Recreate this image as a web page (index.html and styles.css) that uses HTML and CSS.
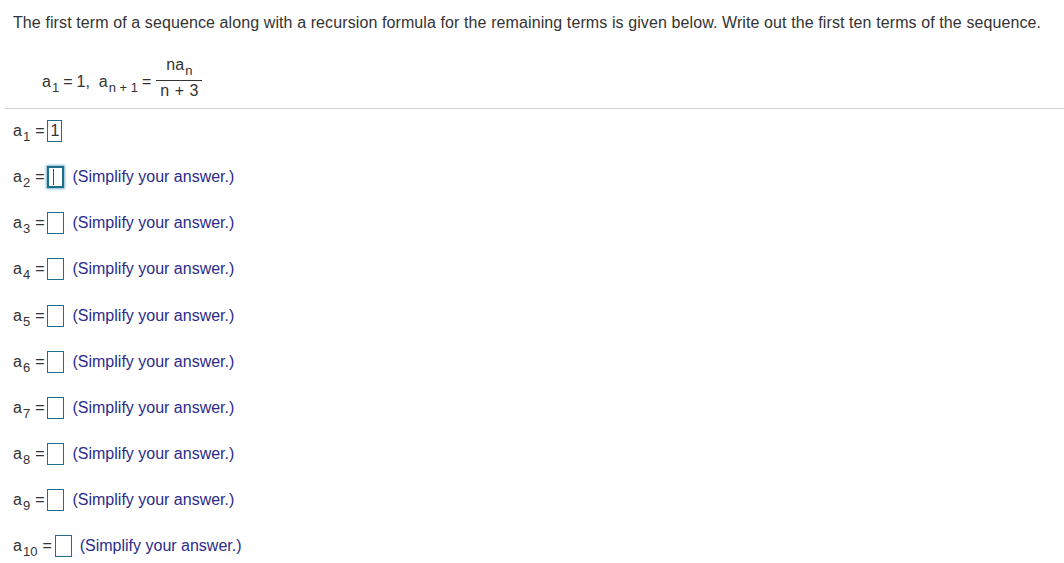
FILE: index.html
```html
<!DOCTYPE html>
<html>
<head>
<meta charset="utf-8">
<link rel="stylesheet" href="styles.css">
</head>
<body>
<div class="page">
  <p class="question">The first term of a sequence along with a recursion formula for the remaining terms is given below. Write out the first ten terms of the sequence.</p>
  <div class="formula">
    <span class="term">a<sub>1</sub></span><span class="eq">=</span><span>1,</span>
    <span class="term second">a<sub>n + 1</sub></span><span class="eq">=</span>
    <span class="frac"><span class="num">na<sub>n</sub></span><span class="den">n + 3</span></span>
  </div>
  <div class="divider"></div>
  <div class="answers">
    <div class="row"><span class="term">a<sub>1</sub></span><span class="eq">=</span><span class="box filled">1</span></div>
    <div class="row"><span class="term">a<sub>2</sub></span><span class="eq">=</span><span class="box focus"><span class="caret"></span></span><span class="hint">(Simplify your answer.)</span></div>
    <div class="row"><span class="term">a<sub>3</sub></span><span class="eq">=</span><span class="box"></span><span class="hint">(Simplify your answer.)</span></div>
    <div class="row"><span class="term">a<sub>4</sub></span><span class="eq">=</span><span class="box"></span><span class="hint">(Simplify your answer.)</span></div>
    <div class="row"><span class="term">a<sub>5</sub></span><span class="eq">=</span><span class="box"></span><span class="hint">(Simplify your answer.)</span></div>
    <div class="row"><span class="term">a<sub>6</sub></span><span class="eq">=</span><span class="box"></span><span class="hint">(Simplify your answer.)</span></div>
    <div class="row"><span class="term">a<sub>7</sub></span><span class="eq">=</span><span class="box"></span><span class="hint">(Simplify your answer.)</span></div>
    <div class="row"><span class="term">a<sub>8</sub></span><span class="eq">=</span><span class="box"></span><span class="hint">(Simplify your answer.)</span></div>
    <div class="row"><span class="term">a<sub>9</sub></span><span class="eq">=</span><span class="box"></span><span class="hint">(Simplify your answer.)</span></div>
    <div class="row"><span class="term">a<sub>10</sub></span><span class="eq">=</span><span class="box"></span><span class="hint">(Simplify your answer.)</span></div>
  </div>
</div>
</body>
</html>
```
FILE: styles.css
```css
html, body {
  margin: 0;
  padding: 0;
  background: #fff;
}
body {
  font-family: "Liberation Sans", Arial, sans-serif;
  font-size: 16px;
  color: #333;
}
.page {
  padding-top: 12px;
}
.question {
  margin: 0;
  padding-left: 13px;
  line-height: 22px;
  letter-spacing: 0.1px;
}
.formula {
  display: flex;
  align-items: center;
  padding-left: 42px;
  margin-top: 25px;
  height: 46px;
}
sub {
  font-size: 13px;
  vertical-align: -5px;
  line-height: 0;
  margin-left: 1px;
}
.eq {
  margin: 0 4px;
}
.second {
  margin-left: 9px;
}
.frac {
  display: inline-flex;
  flex-direction: column;
  align-items: center;
  margin-left: 1px;
  margin-top: -8px;
}
.num {
  padding: 0 4px 6px;
  line-height: 18px;
}
.den {
  border-top: 1px solid #333;
  padding: 1px 4px 0;
  line-height: 18px;
  word-spacing: 1px;
}
.divider {
  margin: 3px 0 0 5px;
  border-top: 1px solid #d6d6d6;
}
.answers {
  display: flex;
  flex-direction: column;
  gap: 24px;
  padding-left: 13px;
  padding-top: 11px;
}
.row {
  display: flex;
  align-items: center;
  height: 22.15px;
}
.row .eq {
  margin: 0 3px 0 5px;
}
.box {
  box-sizing: border-box;
  width: 17px;
  height: 22px;
  border: 1px solid #1e6f8c;
  display: inline-flex;
  align-items: center;
  justify-content: center;
}
.box.filled {
  width: 15px;
  color: #333;
}
.box.focus {
  box-shadow: 0 0 2px 1px #7fb7cc;
  border-width: 2px;
}
.caret {
  width: 1px;
  height: 16px;
  background: #3b3bbf;
  margin-right: 4px;
}
.hint {
  margin-left: 8px;
  color: #2b2b8c;
}
```
